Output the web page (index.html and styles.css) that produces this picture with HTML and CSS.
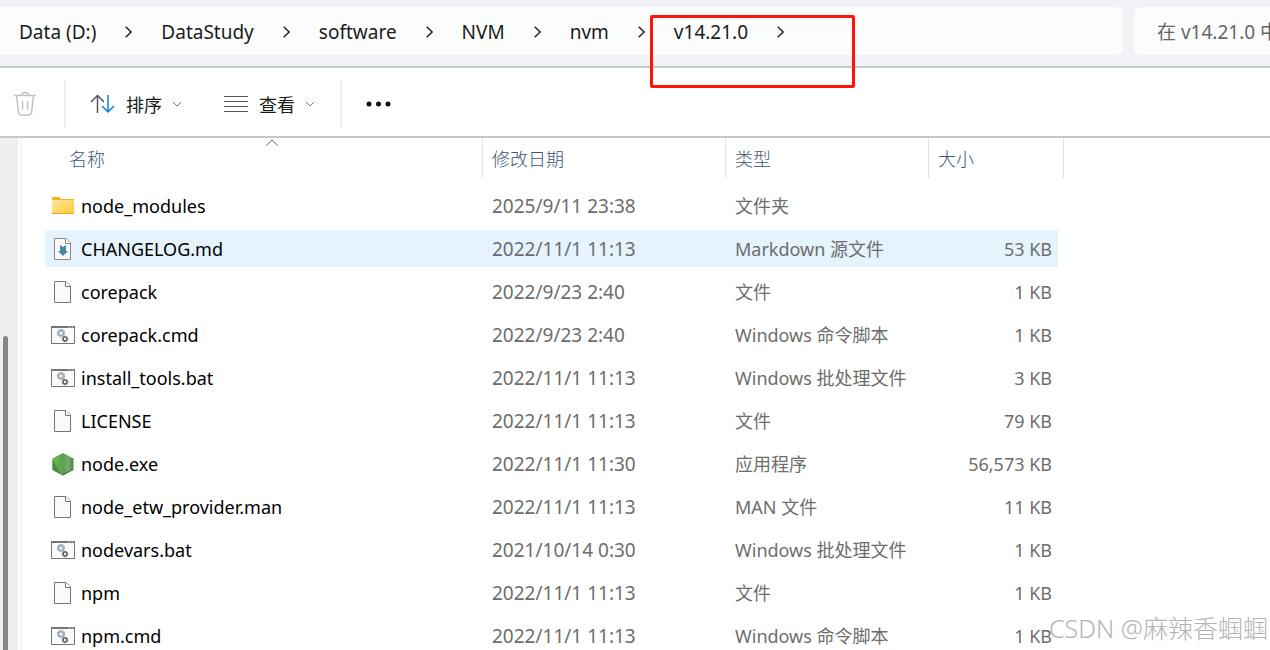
FILE: index.html
```html
<!DOCTYPE html>
<html lang="zh-CN">
  <head>
    <meta charset="UTF-8" />
    <meta name="viewport" content="width=device-width, initial-scale=1.0" />
    <title>v14.21.0</title>
    <link rel="stylesheet" href="styles.css">
  </head>
  <body>
    <!-- shared icons -->
    <svg class="sprite" width="0" height="0">
      <symbol id="chevron" viewBox="0 0 8 14">
        <path d="M1.2 1.8 6.6 7l-5.4 5.2" fill="none" stroke="#222" stroke-width="1.5" />
      </symbol>
      <symbol id="caret" viewBox="0 0 10 6">
        <path d="M1 1l4 4 4-4" fill="none" stroke="#777" stroke-width="1" />
      </symbol>
      <symbol id="file" viewBox="0 0 24 24">
        <path d="M3.5 1.5h11.5l4.5 4.5v16.500h-16z" fill="#fafafa" stroke="#757575" />
        <path d="M14.500 1.500v5h5" fill="#fff" stroke="#757575" />
      </symbol>
      <symbol id="markdown" viewBox="0 0 24 24">
        <path d="M3.500 1.500h11.500l4.500 4.500v16.500h-16z" fill="#fafafa" stroke="#8a8a8a" />
        <path d="M14.500 1.500v5h5" fill="#fff" stroke="#8a8a8a" />
        <path d="M9 8l3 2 3-2v6h2l-5 5-5-5h2z" fill="#4788a8" />
      </symbol>
      <symbol id="script" viewBox="0 0 24 24">
        <path d="M.5 3.500h23v17H.5z" fill="#fafafa" stroke="#757575" />
        <path d="M0 3h24v2H0z" fill="#757575" />
        <path d="M17 4h1m1 0h1m1 0h1" stroke="#ddd" />
        <circle cx="10" cy="10" r="2.500" fill="none" stroke="#a3adb7" stroke-width="2" />
        <circle cx="10" cy="10" r="3.600" fill="none" stroke="#a3adb7" stroke-width="1.200" stroke-dasharray="1.600 1.230" />
        <circle cx="14" cy="16" r="1.900" fill="none" stroke="#5d676f" stroke-width="1.500" />
        <circle cx="14" cy="16" r="2.800" fill="none" stroke="#5d676f" stroke-width="1" stroke-dasharray="1.300 .9" />
      </symbol>
      <symbol id="folder" viewBox="0 0 24 24">
        <defs>
          <linearGradient id="folderFill" x1="0" y1="0" x2="1" y2="1">
            <stop offset="0" stop-color="#ffe7a0" />
            <stop offset="1" stop-color="#fcc934" />
          </linearGradient>
        </defs>
        <path d="M1 4q0-1 1-1h6l2 2h12q1 0 1 1v5H1z" fill="#f2b41c" />
        <path d="M1 6h21q1 0 1 1v13H1z" fill="url(#folderFill)" />
        <path d="M1 19h22v1H1z" fill="#e6ac25" />
      </symbol>
      <symbol id="node" viewBox="0 0 24 24">
        <defs>
          <linearGradient id="nodeFill" x1="0" y1="0" x2="1" y2="0">
            <stop offset="0" stop-color="#6fb94c" />
            <stop offset=".5" stop-color="#5da04f" />
            <stop offset=".75" stop-color="#74aa70" />
            <stop offset="1" stop-color="#438b3c" />
          </linearGradient>
        </defs>
        <path d="M12 1l10.500 5.500v11.500L12 23.500 1.500 18V6.500z" fill="url(#nodeFill)" />
        <path d="M1.500 7L10 22.500 1.500 18z" fill="#478f40" />
        <path d="M10 22.500L22 17v1l-10 5.500z" fill="#458a40" />
      </symbol>
    </svg>

    <header class="address-row">
      <nav class="address-bar">
        <button class="crumb">Data (D:)</button>
        <svg class="chevron"><use href="#chevron" /></svg>
        <button class="crumb">DataStudy</button>
        <svg class="chevron"><use href="#chevron" /></svg>
        <button class="crumb">software</button>
        <svg class="chevron"><use href="#chevron" /></svg>
        <button class="crumb">NVM</button>
        <svg class="chevron"><use href="#chevron" /></svg>
        <button class="crumb">nvm</button>
        <svg class="chevron"><use href="#chevron" /></svg>
        <button class="crumb">v14.21.0</button>
        <svg class="chevron"><use href="#chevron" /></svg>
      </nav>
      <input class="search" type="text" placeholder="在 v14.21.0 中搜索" aria-label="搜索" />
    </header>

    <div class="toolbar">
      <div class="tool-group delete-group">
        <button class="tool" aria-label="删除" disabled>
          <svg width="24" height="26" viewBox="0 0 24 26" fill="none" stroke="#c2c2c2" stroke-width="1.500">
            <path d="M1 4.500h22M3.500 4.500l2 17q.3 2.500 2.500 2.500h8q2.200 0 2.500-2.500l2-17M8.500 4.500q0-3 3.500-3t3.500 3M9.500 10v9M14.500 10v9" />
          </svg>
        </button>
      </div>
      <div class="tool-group">
        <button class="tool">
          <svg width="26" height="20" viewBox="0 0 26 20" fill="none" stroke-width="1.500">
            <path d="M7.500 19V2M1 8l6.500-6.500L14 8" stroke="#555" />
            <path d="M18 1v17M12 12l6 6 6-6" stroke="#0f7fdb" />
          </svg>
          <span>排序</span>
          <svg class="caret"><use href="#caret" /></svg>
        </button>
        <button class="tool">
          <svg width="25" height="18" viewBox="0 0 25 18">
            <path d="M0 1.500h24M0 6.500h24M0 11.500h24M0 16.500h24" stroke="#555" />
          </svg>
          <span>查看</span>
          <svg class="caret"><use href="#caret" /></svg>
        </button>
      </div>
      <button class="tool more" aria-label="更多">
        <svg width="26" height="6" viewBox="0 0 26 6" fill="#111">
          <circle cx="3" cy="3" r="2.500" /><circle cx="12.500" cy="3" r="2.500" /><circle cx="22" cy="3" r="2.500" />
        </svg>
      </button>
    </div>

    <main class="content">
      <div class="nav-pane"><div class="thumb"></div></div>
      <table class="files">
        <colgroup>
          <col class="col-name" /><col class="col-date" /><col class="col-type" /><col class="col-size" />
        </colgroup>
        <thead>
          <tr>
            <th><div class="head">名称
              <svg class="sort-mark" width="12" height="7" viewBox="0 0 12 7"><path d="M.5 6.500L6 1l5.500 5.500" fill="none" stroke="#666" /></svg>
            </div></th>
            <th><div class="head">修改日期</div></th>
            <th><div class="head">类型</div></th>
            <th><div class="head">大小</div></th>
          </tr>
        </thead>
        <tbody>
          <tr>
            <td><div class="name"><svg class="icon"><use href="#folder" /></svg>node_modules</div></td>
            <td class="date">2025/9/11 23:38</td><td>文件夹</td><td class="size"></td>
          </tr>
          <tr class="hovered">
            <td><div class="name"><svg class="icon"><use href="#markdown" /></svg>CHANGELOG.md</div></td>
            <td class="date">2022/11/1 11:13</td><td>Markdown 源文件</td><td class="size">53 KB</td>
          </tr>
          <tr>
            <td><div class="name"><svg class="icon"><use href="#file" /></svg>corepack</div></td>
            <td class="date">2022/9/23 2:40</td><td>文件</td><td class="size">1 KB</td>
          </tr>
          <tr>
            <td><div class="name"><svg class="icon"><use href="#script" /></svg>corepack.cmd</div></td>
            <td class="date">2022/9/23 2:40</td><td>Windows 命令脚本</td><td class="size">1 KB</td>
          </tr>
          <tr>
            <td><div class="name"><svg class="icon"><use href="#script" /></svg>install_tools.bat</div></td>
            <td class="date">2022/11/1 11:13</td><td>Windows 批处理文件</td><td class="size">3 KB</td>
          </tr>
          <tr>
            <td><div class="name"><svg class="icon"><use href="#file" /></svg>LICENSE</div></td>
            <td class="date">2022/11/1 11:13</td><td>文件</td><td class="size">79 KB</td>
          </tr>
          <tr>
            <td><div class="name"><svg class="icon"><use href="#node" /></svg>node.exe</div></td>
            <td class="date">2022/11/1 11:30</td><td>应用程序</td><td class="size">56,573 KB</td>
          </tr>
          <tr>
            <td><div class="name"><svg class="icon"><use href="#file" /></svg>node_etw_provider.man</div></td>
            <td class="date">2022/11/1 11:13</td><td>MAN 文件</td><td class="size">11 KB</td>
          </tr>
          <tr>
            <td><div class="name"><svg class="icon"><use href="#script" /></svg>nodevars.bat</div></td>
            <td class="date">2021/10/14 0:30</td><td>Windows 批处理文件</td><td class="size">1 KB</td>
          </tr>
          <tr>
            <td><div class="name"><svg class="icon"><use href="#file" /></svg>npm</div></td>
            <td class="date">2022/11/1 11:13</td><td>文件</td><td class="size">1 KB</td>
          </tr>
          <tr>
            <td><div class="name"><svg class="icon"><use href="#script" /></svg>npm.cmd</div></td>
            <td class="date">2022/11/1 11:13</td><td>Windows 命令脚本</td><td class="size">1 KB</td>
          </tr>
        </tbody>
      </table>
    </main>

    <div class="marker"></div>
    <div class="watermark">CSDN @麻辣香蝈蝈</div>
  </body>
</html>
```
FILE: styles.css
```css
* {
  box-sizing: border-box;
}

body {
  margin: 0;
  height: 100vh;
  display: flex;
  flex-direction: column;
  overflow: hidden;
  background-color: #fff;
  font-family: "Noto Sans", "Noto Sans CJK SC", sans-serif;
  font-size: 18px;
  color: #6d6d6d;
}

button,
input {
  margin: 0;
  padding: 0;
  border: none;
  background: none;
  font: inherit;
  color: #1b1b1b;
}

.sprite {
  position: absolute;
}

/* Address bar */
.address-row {
  display: flex;
  gap: 11px;
  padding-top: 7px;
  padding-bottom: 11px;
  background-color: #f2f3f7;
  border-bottom: 2px solid #c4c9ce;
}

.address-bar {
  flex: 1;
  display: flex;
  align-items: center;
  gap: 28px;
  height: 48px;
  padding: 2px 0 0 19px;
  background-color: #fbfdfc;
  border-radius: 0 7px 7px 0;
}

.crumb {
  font-size: 19px;
  line-height: 26px;
  white-space: nowrap;
}

.chevron {
  width: 9px;
  height: 14px;
}

.search {
  width: 136px;
  padding: 2px 0 0 23px;
  background-color: #fbfdfc;
  border-radius: 7px 0 0 7px;
  font-size: 19px;
}

.search::placeholder {
  color: #666;
}

/* Toolbar */
.toolbar {
  display: flex;
  align-items: center;
  height: 70px;
  padding-top: 3px;
  border-bottom: 2px solid #c4c9ce;
}

.tool-group {
  display: flex;
  align-items: center;
  gap: 42px;
  height: 48px;
  padding: 0 25px 0 24px;
  border-right: 2px solid #ececec;
}

.delete-group {
  padding: 0 27px 0 13px;
}

.tool {
  display: flex;
  align-items: center;
  gap: 10px;
}

.caret {
  width: 10px;
  height: 6px;
}

.more {
  padding-left: 24px;
}

/* File list */
.content {
  flex: 1;
  min-height: 0;
  display: flex;
  overflow: hidden;
}

.nav-pane {
  flex: none;
  width: 18px;
  margin-right: 2px;
  padding: 198px 0 0 3px;
  background-color: #efefef;
}

.thumb {
  width: 5px;
  height: 100%;
  background-color: #858585;
  border-radius: 3px 3px 0 0;
}

.files {
  flex: none;
  align-self: flex-start;
  table-layout: fixed;
  width: 1044px;
  padding-left: 23px;
  border-left: 2px solid #f5f5f5;
  border-spacing: 0;
}

.col-name {
  width: 438px;
}

.col-date {
  width: 243px;
}

.col-type {
  width: 203px;
}

.col-size {
  width: 135px;
}

th {
  padding: 0 0 6px;
  font-weight: 300;
  text-align: left;
  color: #3f5575;
}

.head {
  position: relative;
  height: 40px;
  padding-left: 9px;
  border-right: 1px solid #e2e2e2;
  line-height: 42px;
}

th:first-child .head {
  padding-left: 24px;
}

.sort-mark {
  position: absolute;
  top: 1px;
  left: 221px;
}

td {
  height: 43px;
  padding: 0 0 0 9px;
  border: solid transparent;
  border-width: 3px 0;
  background-clip: padding-box;
  line-height: 26px;
  white-space: nowrap;
}

td:first-child {
  padding-left: 6px;
  border-radius: 5px 0 0 5px;
}

.name {
  display: flex;
  align-items: center;
  gap: 6px;
  color: #000;
}

.icon {
  width: 24px;
  height: 24px;
}

.date {
  font-size: 19px;
}

.size {
  padding-right: 6px;
  border-right-width: 6px;
  text-align: right;
}

.hovered td {
  background-color: #e5f3ff;
}

/* Red frame around the current folder */
.marker {
  position: absolute;
  top: 15px;
  left: 650px;
  width: 205px;
  height: 73px;
  border: 3px solid #ff1508;
  border-radius: 2px;
}

.watermark {
  position: absolute;
  right: 2px;
  bottom: 4px;
  font-size: 25px;
  font-weight: 300;
  line-height: 36px;
  color: #b4b4b4;
  text-shadow: 1px 1px 1px #fff;
}
```
